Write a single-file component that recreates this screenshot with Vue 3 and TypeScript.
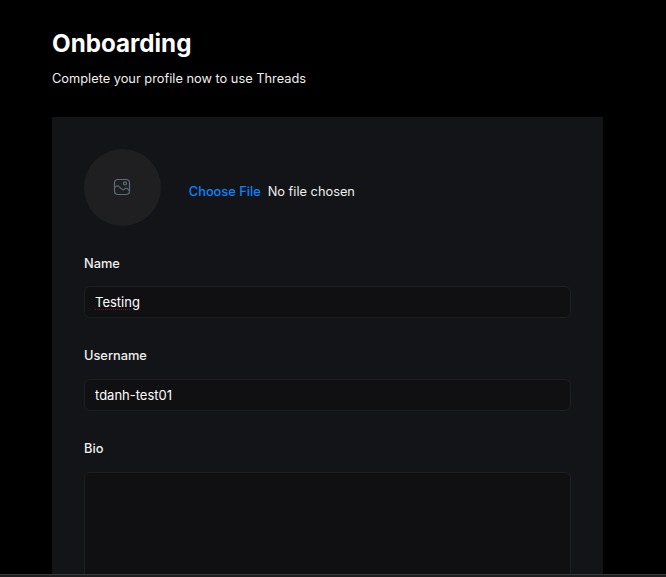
<script setup lang="ts">
const fields = [
  { label: 'Name', value: 'Testing', spell: true },
  { label: 'Username', value: 'tdanh-test01', spell: false },
]
</script>

<template>
  <main class="page">
    <h1 class="title">Onboarding</h1>
    <p class="subtitle">Complete your profile now to use Threads</p>
    <section class="card">
      <div class="photo-row">
        <div class="avatar">
          <svg class="avatar-icon" viewBox="0 0 18 18" fill="none" stroke="currentColor" stroke-width="1.2" stroke-linecap="round" stroke-linejoin="round">
            <rect x="1.5" y="1.5" width="15" height="15" rx="3.4" />
            <path d="M1.6 9.2 L3.8 8 Q4.6 7.6 5.4 8.1 L9.4 11.6 Q10.2 12.2 11 11.6 L12.4 10.4 Q13.2 9.8 14 10.4 L16.4 12.6" />
            <circle cx="12" cy="5.4" r="1.5" />
          </svg>
        </div>
        <input class="file" type="file" tabindex="-1" />
      </div>
      <div v-for="f in fields" :key="f.label" class="field">
        <label class="label">{{ f.label }}</label>
        <div class="input-wrap">
          <input class="input" type="text" :value="f.value" spellcheck="false" />
          <span v-if="f.spell" class="spell-mark"></span>
        </div>
      </div>
      <div class="field">
        <label class="label">Bio</label>
        <textarea class="input area" rows="15" spellcheck="false"></textarea>
      </div>
    </section>
    <nav class="bottombar" aria-label="Bottom bar"></nav>
  </main>
</template>

<style scoped>
.page {
  box-sizing: border-box;
  width: 100%;
  height: 577px;
  overflow: hidden;
  padding: 28px 63px 0 52px;
  background: #000;
  color: #fff;
  font-family: Inter, "Liberation Sans", sans-serif;
}
.title {
  margin: 0;
  font-size: 24.2px;
  line-height: 32px;
  font-weight: 700;
}
.subtitle {
  margin: 11px 0 0;
  font-size: 12.8px;
  line-height: 16px;
  color: #efefef;
}
.card {
  margin-top: 30px;
  padding: 32px;
  background: #121417;
}
.photo-row {
  display: flex;
  align-items: center;
  gap: 28px;
}
.avatar {
  flex: none;
  width: 76.8px;
  height: 76.8px;
  border-radius: 50%;
  background: #1f1f22;
  display: flex;
  align-items: center;
  justify-content: center;
  color: #5c6c7c;
}
.avatar-icon {
  width: 18px;
  height: 18px;
}
.file {
  flex: 1;
  min-width: 0;
  font-family: inherit;
  font-size: 12.8px;
  color: #efefef;
  padding: 8px 0 0;
}
.file::file-selector-button {
  background: transparent;
  border: 0;
  padding: 0;
  margin-right: 7px;
  color: #0a84ff;
  font-family: inherit;
  font-size: 12.8px;
  font-weight: 500;
}
.field {
  display: flex;
  flex-direction: column;
  gap: 14.6px;
  margin-top: 30px;
}
.label {
  font-size: 12.8px;
  line-height: 16px;
  font-weight: 500;
  color: #efefef;
}
.input-wrap {
  position: relative;
}
.input {
  box-sizing: border-box;
  display: block;
  width: 100%;
  height: 32px;
  padding: 0 10px;
  border: 1px solid #1f1f22;
  border-radius: 6px;
  background: #101012;
  color: #fff;
  font-family: inherit;
  font-size: 13px;
  outline: none;
  resize: none;
}
.spell-mark {
  position: absolute;
  left: 11px;
  top: 23px;
  width: 35px;
  border-top: 1px dotted #7a1620;
}
.area {
  height: 300px;
}
.bottombar {
  position: fixed;
  left: 0;
  right: 0;
  bottom: 0;
  height: 3px;
  background: #1f1f22;
  border-top: 1px solid #3a3a3d;
  box-sizing: border-box;
}
</style>

<style>
html, body { margin: 0; background: #000; overflow: hidden; }
</style>
